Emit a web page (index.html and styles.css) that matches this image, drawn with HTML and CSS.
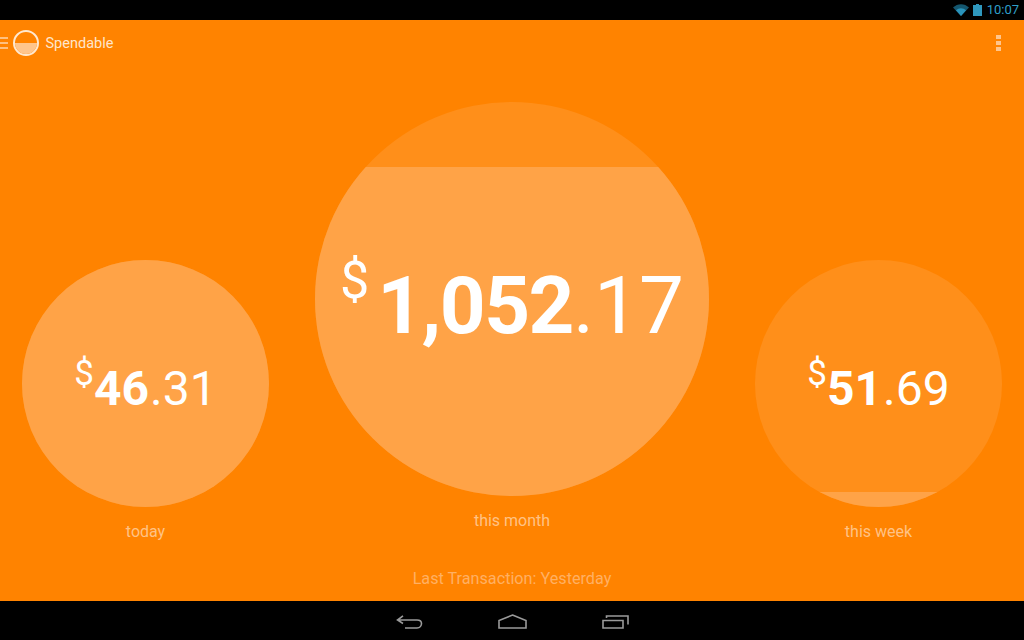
FILE: index.html
```html
<!DOCTYPE html>
<html lang="en">
<head>
<meta charset="utf-8">
<title>Spendable</title>
<link rel="stylesheet" href="styles.css">
</head>
<body>
<div class="screen">
  <header class="status">
    <svg class="wifi" width="16" height="12" viewBox="0 0 16 12"><path d="M0 3.600C4.400-.9 11.600-.9 16 3.600L8 12z" fill="#14566e"/><path d="M3 6.200C5.800 3.500 10.200 3.500 13 6.200L8 12z" fill="#2a93ba"/></svg>
    <svg class="battery" width="9" height="12" viewBox="0 0 9 12"><path d="M3 0h3v1h3v11H0V1h3z" fill="#2f97bd"/></svg>
    <span class="clock">10:07</span>
  </header>
  <main class="app">
    <div class="actionbar">
      <div class="brand">
        <span class="menu"><i></i><i></i><i></i></span>
        <span class="logo"><span class="logo-fill"></span></span>
        <span class="title">Spendable</span>
      </div>
      <span class="overflow"><i></i><i></i><i></i></span>
    </div>
    <div class="gauges">
      <section class="gauge side">
        <div class="disc small"><div class="level level-full"></div>
          <p class="amount"><sup>$</sup><b>46</b><span>.31</span></p></div>
        <p class="label">today</p>
      </section>
      <section class="gauge">
        <div class="disc large"><div class="level level-month"></div>
          <p class="amount"><sup>$</sup><b>1,052</b><span>.17</span></p></div>
        <p class="label">this month</p>
      </section>
      <section class="gauge side">
        <div class="disc small"><div class="level level-week"></div>
          <p class="amount"><sup>$</sup><b>51</b><span>.69</span></p></div>
        <p class="label">this week</p>
      </section>
    </div>
    <p class="last">Last Transaction: Yesterday</p>
  </main>
  <nav class="navbar">
    <svg width="27" height="14" viewBox="0 0 27 14" fill="none" stroke="#9a9a9a" stroke-width="1.600"><path d="M7 .8 1.500 5l5.500 3.500M1.500 5H21c3 0 4.500 1.500 4.500 3.500S24 13 21 13H9"/></svg>
    <svg width="29" height="15" viewBox="0 0 29 15" fill="none" stroke="#9a9a9a" stroke-width="1.600"><path d="M14.500 1 28 6.500V14H1V6.500z"/></svg>
    <svg width="27" height="14" viewBox="0 0 27 14" fill="none" stroke="#9a9a9a" stroke-width="1.600"><path d="M1 5.500h20V13H1zM4.500 3V1h21.500v8.500"/></svg>
  </nav>
</div>
</body>
</html>
```
FILE: styles.css
```css
* { box-sizing: border-box; }
html, body { margin: 0; height: 100%; background: #000; }
.screen {
  width: 1024px; height: 640px; display: flex; flex-direction: column; overflow: hidden;
  font-family: Roboto, "Liberation Sans", sans-serif; color: #fff;
}
.status {
  height: 20px; flex: none; background: #000; display: flex; align-items: center;
  justify-content: flex-end; padding-right: 5px;
}
.wifi { margin-right: 4px; }
.battery { margin-right: 5px; }
.clock { color: #2f9fc8; font-size: 13px; line-height: 20px; }
.app {
  flex: 1; background: #ff8300; display: flex; flex-direction: column; min-height: 0;
}
.actionbar {
  height: 46px; flex: none; display: flex; align-items: center; justify-content: space-between;
  padding-right: 23px;
}
.brand { display: flex; align-items: center; }
.menu { width: 8px; display: flex; flex-direction: column; gap: 3px; margin-right: 5px; }
.menu i { display: block; height: 2px; background: #ffc07f; }
.logo {
  width: 26px; height: 26px; border: 2px solid #ffe8cf; border-radius: 50%;
  overflow: hidden; display: flex; align-items: flex-end;
}
.logo-fill { display: block; width: 100%; height: 11px; background: #ffc58c; }
.title { margin-left: 6.500px; font-size: 14.500px; color: #ffe6cc; }
.overflow { display: flex; flex-direction: column; gap: 2px; }
.overflow i { display: block; width: 5px; height: 4px; background: #ffc58c; }
.gauges {
  flex: none; display: flex; justify-content: space-between; align-items: flex-start;
  padding: 36px 22px 0;
}
.gauge { display: flex; flex-direction: column; align-items: center; }
.side { margin-top: 158px; }
.disc {
  position: relative; border-radius: 50%; overflow: hidden; background: #ff8f1a;
  display: flex; align-items: center; justify-content: center;
}
.small { width: 247px; height: 247px; }
.large { width: 394px; height: 394px; }
.level { position: absolute; left: 0; right: 0; bottom: 0; background: #ffa347; }
.level-full { top: 0; }
.level-month { top: 65px; }
.level-week { top: 232px; }
.amount {
  position: relative; margin: 0; font-size: 48px; font-weight: 400; line-height: 56px;
  white-space: nowrap; display: flex; align-items: baseline; top: 5px;
}
.amount b { font-weight: 700; }
.amount span { margin-left: 1px; }
.amount sup { font-size: 35px; line-height: 1; font-weight: 400; position: relative; top: -20px; margin-right: 0; }
.large .amount { font-size: 80px; line-height: 90px; top: 7px; }
.large .amount b { letter-spacing: -1.500px; }
.large .amount span { margin-left: 0; }
.large .amount sup { font-size: 52px; top: -35px; margin-right: 8px; }
.label { margin: 15px 0 0; font-size: 16px; line-height: 20px; color: #ffc285; font-weight: 400; }
.last {
  margin: 0; text-align: center; font-size: 16.200px; line-height: 20px; color: #ffb063;
  padding-top: 27px;
}
.navbar {
  height: 39px; flex: none; background: #000; display: flex; align-items: flex-end; justify-content: center;
  gap: 75px; padding-bottom: 11px;
}
```
